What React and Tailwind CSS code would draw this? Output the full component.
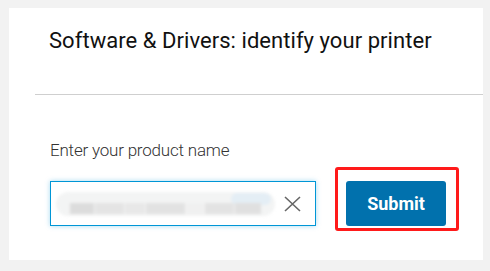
import React from "react";

export default function App() {
  return (
    <div className="w-[490px] h-[271px] bg-[#f2f2f2] pt-[8px] pl-[9px] overflow-hidden" style={{ fontFamily: 'Roboto, "Open Sans", sans-serif' }}>
      <div className="w-[474px] h-[252px] bg-white relative">
        <div className="pl-[40px] pt-[18px] h-[86px]">
          <h1 className="text-[22px] leading-[30px] text-[#111] tracking-[0.05px]">Software &amp; Drivers: identify your printer</h1>
        </div>
        <div className="ml-[26px] h-px bg-[#cfcfcf]" />
        <div className="pl-[41px] pt-[44px]">
          <div className="text-[17px] leading-[22px] text-[#333] font-light tracking-[-0.2px]">Enter your product name</div>
          <div className="flex items-center mt-[20px]">
            <div className="w-[266px] h-[45px] border border-[#0096d6] shadow-[0_0_5px_rgba(0,150,214,0.35)] flex items-center pl-[5px] pr-[14px]">
              <div className="relative flex-1 h-[24px] rounded-full bg-[#f3f4f4] blur-[1.5px] flex items-center overflow-hidden">
                <div className="absolute right-[4px] top-[1px] w-[40px] h-[12px] rounded-full bg-[#e4eef5]" />
                <div className="relative flex w-full h-[11px] mt-[9px] px-[14px] gap-[1px]">
                  <div className="w-[24px] bg-[#dcdcdc]" />
                  <div className="w-[30px] bg-[#e4e4e4]" />
                  <div className="w-[20px] bg-[#e8e8e8]" />
                  <div className="w-[40px] bg-[#e2e2e2]" />
                  <div className="w-[18px] bg-[#f0f0f0]" />
                  <div className="w-[30px] bg-[#e3e3e3]" />
                  <div className="w-[26px] bg-[#e0e0e0]" />
                </div>
              </div>
              <svg className="ml-[9px]" width="17" height="16" viewBox="0 0 17 16" fill="none" stroke="#666" strokeWidth="1.6">
                <path d="M1 1L16 15M16 1L1 15" />
              </svg>
            </div>
            <button className="ml-[30px] w-[100px] h-[45px] bg-[#0171ad] rounded-[3px] text-white font-bold text-[18px]">Submit</button>
          </div>
        </div>
        <div className="absolute left-[326px] top-[159px] w-[124px] h-[64px] border-[3px] border-[#ff1a1a] rounded-[3px]" />
      </div>
    </div>
  );
}
